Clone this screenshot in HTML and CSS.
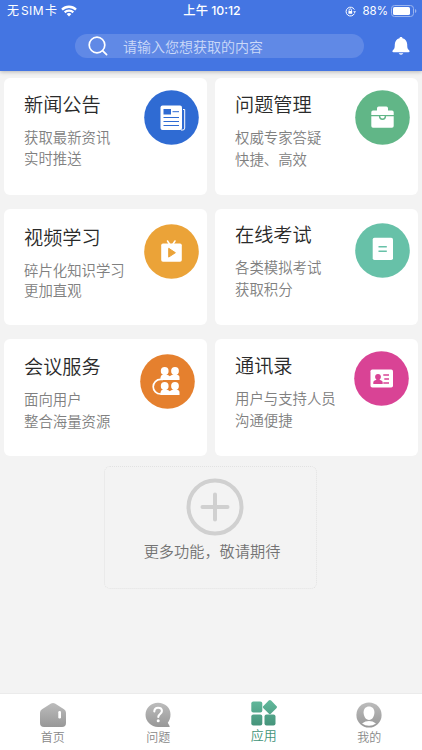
FILE: index.html
```html
<!DOCTYPE html>
<html lang="zh-CN">
<head>
<meta charset="utf-8">
<meta name="viewport" content="width=device-width, initial-scale=1">
<title>应用</title>
<link rel="stylesheet" href="styles.css">
</head>
<body>
<header class="header">
  <div class="status">
    <div class="status-left">
      <span class="carrier">无<span class="sim">SIM</span>卡</span>
      <svg class="wifi" viewBox="0 0 16 12" width="16" height="12"><g fill="none" stroke="#fff" stroke-width="2.3"><path d="M1 4.6a10 10 0 0 1 14 0"/><path d="M3.7 7.4a6.1 6.1 0 0 1 8.6 0"/></g><path d="M8 11.6 5.6 9.1a3.4 3.4 0 0 1 4.800 0z" fill="#fff"/></svg>
    </div>
    <div class="time">上午 10:12</div>
    <div class="status-right">
      <svg width="11" height="11" viewBox="0 0 11 11"><path d="M9.400 3.600A4.400 4.400 0 1 0 9.400 7.600" fill="none" stroke="#fff" stroke-width="1"/><path d="M8.200 5.200H11L9.700 7.200z" fill="#fff"/><rect x="3.400" y="4.900" width="3.800" height="2.900" rx=".4" fill="#fff"/><path d="M4.100 5V4a1.200 1.200 0 0 1 2.400 0v1" fill="none" stroke="#fff" stroke-width=".8"/></svg>
      <span class="percent">88%</span>
      <svg width="26" height="12" viewBox="0 0 26 12"><rect x=".5" y=".5" width="22" height="11" rx="3" fill="none" stroke="#9bb5ef"/><rect x="2" y="2" width="17" height="8" rx="1.600" fill="#fff"/><path d="M24 4q1.400.6 1.400 2T24 8z" fill="#9bb5ef"/></svg>
    </div>
  </div>
  <div class="toolbar">
    <div class="search">
      <svg width="20" height="20" viewBox="0 0 20 20"><g fill="none" stroke="#fff" stroke-width="1.700" stroke-linecap="round"><circle cx="9" cy="9" r="7.800"/><path d="m14.800 14.800 3.800 3.900"/></g></svg>
      <span>请输入您想获取的内容</span>
    </div>
    <svg class="bell" width="18" height="20" viewBox="0 0 18 20" fill="#fff"><path d="M9 1c.9 0 1.400.5 1.500 1.200C13.500 3 15 5.300 15.200 8.200c0 3.800.4 4.600 1.900 6.100.9.900.6 2-.6 2h-15c-1.200 0-1.500-1.100-.6-2 1.500-1.500 1.900-2.300 1.900-6.100C3 5.300 4.500 3 7.500 2.200 7.600 1.500 8.100 1 9 1z"/><path d="M6.700 17.200h4.600a2.400 2 0 0 1-4.600 0z"/></svg>
  </div>
</header>

<main class="content">
  <section class="grid">
    <article class="card">
      <div class="copy"><h2>新闻公告</h2><p class="tight">获取最新资讯<br>实时推送</p></div>
      <svg class="icon" viewBox="0 0 55 55"><circle cx="27.500" cy="27.500" r="27.300" fill="#2f6bd3"/><rect x="16.500" y="15.500" width="21.500" height="24.500" rx="2" fill="#fff"/><path d="M39 19.500h1.700v18.600a1.900 1.900 0 0 1-1.900 1.900H37" fill="none" stroke="#fff" stroke-width="1"/><rect x="19.500" y="19" width="7.500" height="5.500" fill="#2f6bd3"/><path d="M28.500 21.700H35M19.500 27.500H35M19.500 31.500H35M19.500 35.500H35" stroke="#2f6bd3" stroke-width="1"/></svg>
    </article>
    <article class="card">
      <div class="copy"><h2>问题管理</h2><p>权威专家答疑<br>快捷、高效</p></div>
      <svg class="icon" viewBox="0 0 55 55"><circle cx="27.500" cy="27.500" r="27.300" fill="#61b687"/><path d="M18 20.500h4v-2.300q0-1.700 1.700-1.700h7.600q1.700 0 1.700 1.700v2.300h4q1.700 0 1.700 1.700V25H16.300v-2.800q0-1.700 1.700-1.700zM16.300 26.300h7.600a3.600 3.600 0 0 0 7.200 0h7.600v9.700q0 1.700-1.700 1.700H18q-1.700 0-1.700-1.700z" fill="#fff"/><path d="M25.400 26h4.200v.4a2.100 2.100 0 0 1-4.200 0z" fill="#fff"/></svg>
    </article>
    <article class="card low">
      <div class="copy"><h2>视频学习</h2><p class="tight">碎片化知识学习<br>更加直观</p></div>
      <svg class="icon" viewBox="0 0 55 55"><circle cx="27.500" cy="27.500" r="27.300" fill="#eba338"/><rect x="17.200" y="19.500" width="20.600" height="18.300" rx="1.800" fill="#fff"/><path d="m23.500 17 2.300 3.500M31 17l-2.300 3.500" stroke="#fff" stroke-width="1.500" stroke-linecap="round"/><path d="M24.700 24.300v8.800l6.700-4.400z" fill="#eba338" stroke="#eba338" stroke-linejoin="round"/></svg>
    </article>
    <article class="card exam">
      <div class="copy"><h2>在线考试</h2><p>各类模拟考试<br>获取积分</p></div>
      <svg class="icon" viewBox="0 0 55 55"><circle cx="27.500" cy="27.500" r="27.300" fill="#67c1a8"/><rect x="17.700" y="14.700" width="20.300" height="22.300" rx="1.800" fill="#fff"/><path d="M23.500 23.800h8.300M23.500 28.300h8.300" stroke="#67c1a8" stroke-width="1.500"/></svg>
    </article>
    <article class="card low meeting">
      <div class="copy"><h2>会议服务</h2><p>面向用户<br>整合海量资源</p></div>
      <svg class="icon" viewBox="0 0 55 55"><circle cx="27.500" cy="27.500" r="27.300" fill="#e5802e"/><g fill="#fff"><circle cx="24.700" cy="17" r="3.900"/><circle cx="35" cy="17" r="3.900"/><path d="M20.500 26v-2.500q0-2.300 2.700-2.900v-2h3v2q2.600.4 3.600 1.700 1-1.300 3.700-1.700v-2h3v2q3 .6 3 2.900V26zM20.500 41v-2.500q0-2.300 2.700-2.900v-2h3v2q2.600.4 3.600 1.700 1-1.300 3.700-1.700v-2h3v2q3 .6 3 2.900V41z"/><circle cx="24.700" cy="32" r="3.900"/><circle cx="35" cy="32" r="3.900"/></g><path d="M23 25.400h-2.500a7.300 7.300 0 0 0 0 14.600H24" fill="none" stroke="#fff" stroke-width="1.700"/></svg>
    </article>
    <article class="card contacts">
      <div class="copy"><h2>通讯录</h2><p>用户与支持人员<br>沟通便捷</p></div>
      <svg class="icon" viewBox="0 0 55 55"><circle cx="27.500" cy="27.500" r="27.300" fill="#d94395"/><rect x="16.500" y="18.500" width="22.500" height="18" rx="1.800" fill="#fff"/><circle cx="24" cy="25.800" r="2.900" fill="#d94395"/><path d="M19.300 32.900v-1.500q0-2 3-2.500v-2h3.400v2q3 .5 3 2.500v1.500z" fill="#d94395"/><path d="M29.300 24H35M30.300 28H35M29.300 32H35" stroke="#d94395" stroke-width="1.400"/></svg>
    </article>
  </section>

  <section class="more">
    <svg width="58" height="58" viewBox="0 0 58 58"><g fill="none" stroke="#d0d0d0" stroke-width="4" stroke-linecap="round"><circle cx="29" cy="29" r="26.500"/><path d="M29 16.500v25M16.500 29h25"/></g></svg>
    <p>更多功能，敬请期待</p>
  </section>
</main>

<nav class="tabs">
  <svg width="0" height="0" class="defs"><defs><linearGradient id="grey" x1="0" y1="0" x2="0" y2="1"><stop stop-color="#bcbcbc"/><stop offset="1" stop-color="#989898"/></linearGradient><linearGradient id="green" gradientUnits="userSpaceOnUse" x1="0" y1="0" x2="0" y2="26"><stop stop-color="#62b99c"/><stop offset="1" stop-color="#45937a"/></linearGradient></defs></svg>
  <a class="tab"><svg width="26" height="26" viewBox="0 0 26 26"><path d="M11 1.600q2-1.200 4 0l9 5.600q2 1.200 2 3.500V21q0 4-4 4H4q-4 0-4-4V10.700q0-2.300 2-3.500z" fill="url(#grey)"/><rect x="18.300" y="9" width="2.700" height="7.500" rx="1.200" fill="#fff"/></svg><span>首页</span></a>
  <a class="tab"><svg width="26" height="26" viewBox="0 0 26 26"><path d="M13 .7c7 0 12.500 5 12.500 11.800 0 3.500-1 6-2.700 8.200l1.900 3.500q.3.700-.5.700H13C6 24.900.5 19.400.5 12.700S6 .7 13 .7z" fill="url(#grey)"/><path d="M9.300 9.400c.1-2.300 1.600-3.700 3.800-3.700 2.300 0 3.800 1.400 3.800 3.300 0 2.900-3.600 3-3.600 5.900" fill="none" stroke="#fff" stroke-width="2.100" stroke-linecap="round"/><circle cx="13.200" cy="18.800" r="1.500" fill="#fff"/></svg><span>问题</span></a>
  <a class="tab active"><svg width="26" height="26" viewBox="0 0 26 26" fill="url(#green)"><rect x=".3" y="1.500" width="11" height="11" rx="2"/><path d="M17.700 .6q1.200-1.200 2.400 0l5.300 5.300q1.200 1.200 0 2.400l-5.300 5.300q-1.200 1.200-2.400 0l-5.300-5.300q-1.200-1.200 0-2.400z"/><rect x=".3" y="14.500" width="11" height="11" rx="2"/><rect x="13.500" y="14.500" width="11" height="11" rx="2"/></svg><span>应用</span></a>
  <a class="tab"><svg width="26" height="26" viewBox="0 0 26 26"><circle cx="13" cy="13" r="12.600" fill="url(#grey)"/><path d="M13 4.500c3.300 0 5.400 2.300 5.400 5.800 0 4.400-2.300 7.700-5.400 7.700s-5.400-3.300-5.400-7.700c0-3.500 2.100-5.800 5.400-5.800z" fill="#fff"/><path d="M6 21.400q3.400-2.300 7-2.300t7 2.300q-3 2.300-7 2.300t-7-2.300z" fill="#fff"/></svg><span>我的</span></a>
</nav>
</body>
</html>
```
FILE: styles.css
```css
* { box-sizing: border-box; }
body {
  margin: 0;
  height: 750px;
  display: flex;
  flex-direction: column;
  overflow: hidden;
  background: #f3f3f3;
  font-family: "Noto Sans CJK SC", sans-serif;
  font-weight: 350;
}
h2, p { margin: 0; }
svg { display: block; flex: none; }

.header {
  height: 71px;
  flex: none;
  background: #4475e2;
  color: #fff;
  box-shadow: 0 1px 4px rgba(0, 0, 0, .25);
}
.status {
  height: 22px;
  display: grid;
  grid-template-columns: 1fr auto 1fr;
  align-items: center;
  padding: 0 5px 0 7px;
  font-family: Inter, "Noto Sans CJK SC", sans-serif;
  font-size: 12px;
  font-weight: 400;
  line-height: 22px;
}
.status-left, .status-right { display: flex; align-items: center; }
.status-left { gap: 4px; }
.status-right { justify-content: flex-end; gap: 3px; }
.sim { letter-spacing: .4px; margin: 0 1px 0 2px; }
.time { font-size: 12.300px; font-weight: 500; }
.percent { margin-left: 3px; font-size: 11.500px; }

.toolbar { display: flex; align-items: center; padding: 12px 12px 0 75px; }
.search {
  width: 289px;
  height: 24px;
  display: flex;
  align-items: center;
  gap: 15px;
  padding-left: 13px;
  border-radius: 12px;
  background: #6089e6;
  color: #cbd9f8;
  font-size: 14px;
  line-height: 24px;
}
.bell { margin-left: 28px; }

.content { flex: 1; padding: 7px 4px 0; }
.grid {
  display: grid;
  grid-template-columns: 203px 203px;
  grid-auto-rows: 116.500px;
  gap: 14px 8px;
}
.card {
  display: flex;
  justify-content: space-between;
  align-items: flex-start;
  padding: 12px 8px 0 20px;
  border-radius: 6px;
  background: #fff;
}
.card h2 { font-size: 19.200px; line-height: 28px; font-weight: 350; color: #2a2a2a; white-space: nowrap; }
.card p { margin-top: 8px; font-size: 14.400px; line-height: 22px; color: #808080; white-space: nowrap; }
.card .tight { margin-top: 9px; line-height: 20.500px; }
.icon { width: 55px; height: 55px; }
.low { padding-top: 14px; }
.low .icon { margin-top: 1px; }
.exam { padding-top: 11.500px; }
.exam .icon { margin-top: 3px; }
.meeting { padding-top: 13px; }
.meeting .icon { margin: 2px 4.500px 0 0; }
.contacts { padding-top: 11.500px; }
.contacts .icon { margin-right: 1.500px; }

.more {
  width: 213px;
  height: 123px;
  margin: 10px auto 0 100px;
  display: flex;
  flex-direction: column;
  align-items: center;
  padding: 11px 0 0 8px;
  border: 1px dotted #e2e2e2;
  border-radius: 6px;
}
.more p { margin-top: 2px; padding-right: 5px; font-size: 15.200px; line-height: 24px; color: #737373; white-space: nowrap; }

.tabs {
  height: 57px;
  flex: none;
  display: grid;
  grid-template-columns: repeat(4, 1fr);
  background: #fff;
  border-top: 1px solid #ebebeb;
  position: relative;
}
.defs { position: absolute; }
.tab {
  display: flex;
  flex-direction: column;
  align-items: center;
  padding-top: 8px;
  font-size: 12px;
  line-height: 17px;
  color: #888;
}
.active { padding-top: 6px; font-size: 13px; color: #3f9478; }
```
